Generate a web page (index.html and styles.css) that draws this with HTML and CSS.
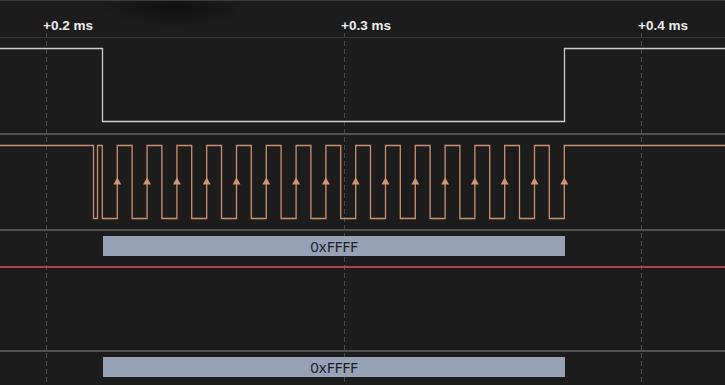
FILE: index.html
```html
<!DOCTYPE html>
<html lang="en">
<head>
    <meta charset="UTF-8">
    <title>Logic capture</title>
    <link rel="stylesheet" href="styles.css">
</head>
<body>
    <div class="capture">
        <!-- grid lines behind the traces -->
        <div class="grid">
            <div class="grid-line" style="left: 46px;"></div>
            <div class="grid-line" style="left: 344px;"></div>
            <div class="grid-line" style="left: 641px;"></div>
        </div>

        <div class="ruler">
            <span class="tick" style="left: 43px;">+0.2 ms</span>
            <span class="tick" style="left: 341px;">+0.3 ms</span>
            <span class="tick" style="left: 638px;">+0.4 ms</span>
        </div>

        <div class="channel ch-a">
            <svg width="725" height="95">
                <path class="trace white" d="M0 10.5 H102.5 V83.5 H564.5 V10.5 H725"/>
            </svg>
        </div>
        <div class="sep"></div>

        <div class="channel ch-b">
            <svg width="725" height="94">
                <defs>
                    <path id="arrow" d="M-4 49.5 L0 42.5 L4 49.5 Z"/>
                </defs>
                <path class="trace clock" d="M0 10.5 H93.5 V83.5 H97.5 V10.5 H102.3 V83.5 H117.3 V10.5 H132.1 V83.5 H147.1 V10.5 H161.9 V83.5 H176.9 V10.5 H191.7 V83.5 H206.7 V10.5 H221.5 V83.5 H236.5 V10.5 H251.3 V83.5 H266.3 V10.5 H281.1 V83.5 H296.1 V10.5 H310.9 V83.5 H325.9 V10.5 H340.7 V83.5 H355.7 V10.5 H370.5 V83.5 H385.5 V10.5 H400.3 V83.5 H415.3 V10.5 H430.1 V83.5 H445.1 V10.5 H459.9 V83.5 H474.9 V10.5 H489.7 V83.5 H504.7 V10.5 H519.5 V83.5 H534.5 V10.5 H549.3 V83.5 H564.3 V10.5 H725"/>
                <g class="arrows">
                    <use href="#arrow" x="117.3"/>
                    <use href="#arrow" x="147.1"/>
                    <use href="#arrow" x="176.9"/>
                    <use href="#arrow" x="206.7"/>
                    <use href="#arrow" x="236.5"/>
                    <use href="#arrow" x="266.3"/>
                    <use href="#arrow" x="296.1"/>
                    <use href="#arrow" x="325.9"/>
                    <use href="#arrow" x="355.7"/>
                    <use href="#arrow" x="385.5"/>
                    <use href="#arrow" x="415.3"/>
                    <use href="#arrow" x="445.1"/>
                    <use href="#arrow" x="474.9"/>
                    <use href="#arrow" x="504.7"/>
                    <use href="#arrow" x="534.5"/>
                    <use href="#arrow" x="564.3"/>
                </g>
            </svg>
        </div>
        <div class="sep"></div>

        <div class="decode">
            <div class="frame">0xFFFF</div>
        </div>

        <div class="channel ch-c">
            <svg width="725" height="94">
                <path class="trace red" d="M0 11 H725"/>
            </svg>
        </div>
        <div class="sep"></div>

        <div class="decode">
            <div class="frame">0xFFFF</div>
        </div>
    </div>
</body>
</html>
```

FILE: styles.css
```css
body {
    margin: 0;
    padding: 0;
    background: #1c1c1c;
    font-family: "Liberation Sans", Arial, sans-serif;
}

.capture {
    position: relative;
    width: 725px;
    height: 385px;
    overflow: hidden;
    display: flex;
    flex-direction: column;
    background: #1c1c1c;
}

.grid {
    position: absolute;
    top: 33px;
    left: 0;
    right: 0;
    bottom: 0;
}

.grid-line {
    position: absolute;
    top: 0;
    bottom: 0;
    width: 1px;
    background: repeating-linear-gradient(to bottom, #4b4b4b 0 5px, transparent 5px 8px);
}

.ruler {
    position: relative;
    flex: none;
    height: 38px;
    box-sizing: border-box;
    border-top: 1px solid #3e3e3e;
    border-bottom: 1px solid #333;
    background: radial-gradient(ellipse 75px 20px at 175px 6px, #111, rgba(28, 28, 28, 0));
}

.tick {
    position: absolute;
    top: 17px;
    font-size: 13.5px;
    line-height: 15px;
    font-weight: bold;
    color: #ededed;
    white-space: nowrap;
}

.channel {
    position: relative;
    flex: none;
}

.channel svg {
    display: block;
}

.ch-a {
    height: 95px;
}

.ch-b,
.ch-c {
    height: 94px;
}

.trace {
    fill: none;
    stroke-width: 1.3;
}

.white {
    stroke: #cdcdcd;
}

.clock {
    stroke: #c98f72;
}

.arrows {
    fill: #d09677;
}

.red {
    stroke: #d9505c;
    stroke-width: 1.6;
}

.sep {
    position: relative;
    flex: none;
    height: 2px;
    background: #525252;
}

.decode {
    position: relative;
    flex: none;
    height: 25px;
    padding-top: 5px;
    box-sizing: border-box;
}

.frame {
    margin-left: 103px;
    width: 462px;
    height: 20px;
    background: #97a2b7;
    color: #1a1e2a;
    font-family: "Noto Sans", sans-serif;
    font-size: 15px;
    line-height: 20px;
    text-align: center;
}
```
